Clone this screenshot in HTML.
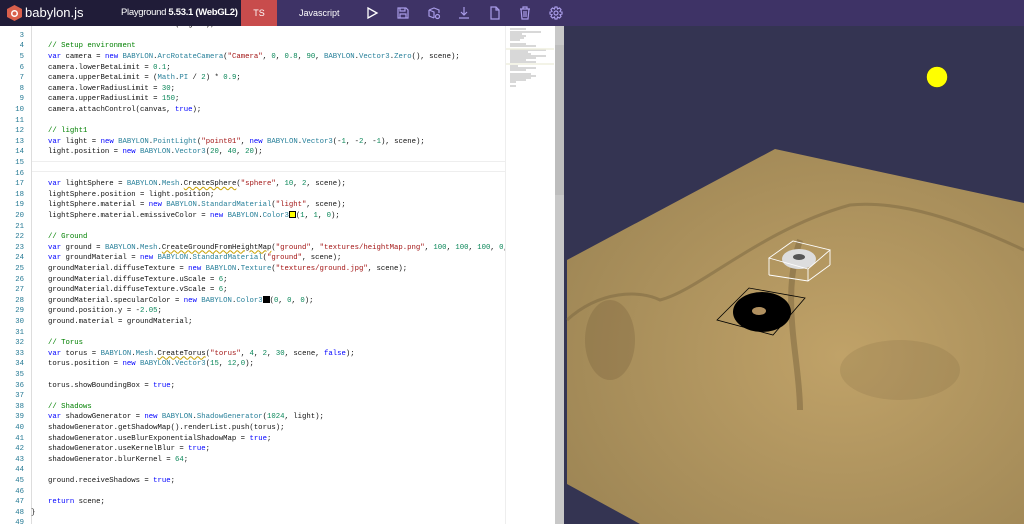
<!DOCTYPE html>
<html><head><meta charset="utf-8"><style>
*{margin:0;padding:0;box-sizing:border-box}
body{width:1024px;height:524px;overflow:hidden;background:#fff;font-family:"Liberation Sans",sans-serif;position:relative}
#top{position:absolute;left:0;top:0;width:1024px;height:26px;z-index:10;background:#3e3366}
#hl{position:absolute;left:0;top:0;width:241px;height:26px;background:#201c38}
#ts{position:absolute;left:241px;top:0;width:36px;height:26px;background:#c84c4c;color:#fff;font-size:9px;text-align:center;line-height:26px}
.ht{position:absolute;top:0;line-height:26px;color:#fff;font-size:9px}
.ic{position:absolute;top:6px}
#ed{position:absolute;left:0;top:26px;width:505px;height:498px;background:#fff;overflow:hidden}
#gut{position:absolute;left:31px;top:26px;width:1px;height:498px;background:#ddd}
.ln{position:absolute;left:0;width:24px;text-align:right;font:7.3px "Liberation Mono",monospace;color:#237893;height:10.6px;line-height:10.6px}
.cd{position:absolute;left:48px;font:7.3px "Liberation Mono",monospace;color:#111;white-space:pre;height:10.6px;line-height:10.6px}
.k{color:#0000ff}.b{color:#267f99}.s{color:#a31515}.n{color:#098658}.c{color:#008000}
.w{text-decoration:underline wavy #c8a000;text-decoration-thickness:1px}
#mini{position:absolute;left:505px;top:26px;width:50px;height:498px;background:#fff;border-left:1px solid #eee}
#sb{position:absolute;left:555px;top:26px;width:9px;height:498px;background:#c8c8c8}
#cv{position:absolute;left:564px;top:26px;width:460px;height:498px;background:#343452;overflow:hidden}
</style></head><body>
<div id="ed"></div><div id="gut"></div>
<div style="position:absolute;left:32px;top:161px;width:473px;height:11px;border-top:1px solid #eee;border-bottom:1px solid #eee"></div>
<div id="lines"></div>
<div id="top">
<div id="hl"></div>
<svg style="position:absolute;left:7px;top:5px" width="15" height="16" viewBox="0 0 15 16"><polygon points="7.5,0 15,4 15,12 7.5,16 0,12 0,4" fill="#d9604c"/><circle cx="7.5" cy="8.5" r="3.5" fill="#fff"/><circle cx="7.5" cy="8.5" r="2" fill="#d9604c"/></svg>
<div class="ht" style="left:25px;font-size:13px">babylon.js</div>
<div class="ht" style="left:121px;font-size:9.5px;letter-spacing:-0.3px">Playground <b>5.53.1 (WebGL2)</b></div>
<div id="ts">TS</div>
<div class="ht" style="left:299px">Javascript</div>
<svg class="ic" style="left:365px" width="14" height="14" viewBox="0 0 14 14" fill="none" stroke="#fff" stroke-width="1.3"><path d="M3 2L12 7L3 12Z"/></svg>
<svg class="ic" style="left:396px" width="14" height="14" viewBox="0 0 14 14" fill="none" stroke="#a99ce8" stroke-width="1.2"><path d="M2 2H10L12 4V12H2Z M4 2V5H9V2 M4 12V8H10V12"/></svg>
<svg class="ic" style="left:427px" width="14" height="14" viewBox="0 0 14 14" fill="none" stroke="#a99ce8" stroke-width="1.2"><path d="M2 4L7 2L12 4V7 M2 4V10L7 12 M2 4L7 6V12"/><circle cx="10.5" cy="10.5" r="2"/></svg>
<svg class="ic" style="left:457px" width="14" height="14" viewBox="0 0 14 14" fill="none" stroke="#a99ce8" stroke-width="1.2"><path d="M7 1V9 M4 6L7 9L10 6 M2 12H12"/></svg>
<svg class="ic" style="left:488px" width="14" height="14" viewBox="0 0 14 14" fill="none" stroke="#a99ce8" stroke-width="1.2"><path d="M3 1H8L11 4V13H3Z M8 1V4H11"/></svg>
<svg class="ic" style="left:518px" width="14" height="14" viewBox="0 0 14 14" fill="none" stroke="#a99ce8" stroke-width="1.2"><path d="M2 3H12 M5 3V1H9V3 M3 3L4 13H10L11 3 M6 5V11 M8 5V11"/></svg>
<svg class="ic" style="left:549px" width="14" height="14" viewBox="0 0 14 14" fill="none" stroke="#a99ce8" stroke-width="1.2"><circle cx="7" cy="7" r="2"/><path d="M6 1H8L8.5 3L10.5 2L12 3.5L11 5.5L13 6V8L11 8.5L12 10.5L10.5 12L8.5 11L8 13H6L5.5 11L3.5 12L2 10.5L3 8.5L1 8V6L3 5.5L2 3.5L3.5 2L5.5 3Z"/></svg>
</div>
<div id="mini">
<svg width="50" height="130" viewBox="0 0 50 130"><g stroke="#999" stroke-width="0.8"><path d="M4 3H20M4 6H35M4 8H16M4 10H20M4 12H18M4 14H14M4 18H20M4 20H30M4 24H40M4 26H22M4 28H25M4 30H40M4 32H30M4 34H20M4 36H30M4 40H12M4 42H30M4 44H20M4 48H25M4 50H30M4 52H25M4 54H20M4 56H10M4 60H10"/></g><rect x="0" y="22" width="48" height="2" fill="#eed" opacity=".7"/><rect x="0" y="37" width="48" height="2" fill="#eed" opacity=".7"/></svg>
</div>
<div id="sb"><div style="position:absolute;left:0;top:19px;width:9px;height:150px;background:#bdbdbd"></div></div>
<div id="cv">
<svg width="460" height="498" viewBox="564 26 460 498">
<defs><radialGradient id="g" cx="60%" cy="55%" r="70%"><stop offset="0" stop-color="#c0a268"/><stop offset="1" stop-color="#9e8655"/></radialGradient></defs>
<polygon points="775,149 1024,203 1024,524 640,524 567,484 567,260" fill="url(#g)"/>
<path d="M567,320 C600,290 640,290 660,300 C700,290 760,230 850,205 C900,200 960,220 1024,250" stroke="#7a6540" stroke-width="3" fill="none" opacity=".5"/>
<path d="M800,240 C780,300 800,360 800,410" stroke="#6a5535" stroke-width="6" fill="none" opacity=".4"/>
<ellipse cx="610" cy="340" rx="25" ry="40" fill="#6a5535" opacity=".25"/>
<ellipse cx="900" cy="370" rx="60" ry="30" fill="#6a5535" opacity=".15"/>
<polygon points="717,320 749,288 805,298 773,335" fill="none" stroke="#000" stroke-width="0.8"/>
<ellipse cx="762" cy="312" rx="29" ry="20" fill="#000"/>
<ellipse cx="759" cy="311" rx="7" ry="4" fill="#b09060"/>
<ellipse cx="799" cy="259" rx="17" ry="10" fill="#ddd"/>
<ellipse cx="799" cy="257" rx="6" ry="3" fill="#555"/>
<g fill="none" stroke="#fff" stroke-width="0.9"><polygon points="769,258 793,241 830,250 808,269"/><path d="M769,258V275 M808,269V281 M830,250V265 M769,275L808,281L830,265"/></g>
<circle cx="937" cy="77" r="10.5" fill="#ffff00" stroke="#333" stroke-width="0.5"/>
</svg>
</div>
<script>
var L={2:'<span class="k">var</span> scene = <span class="k">new</span> <span class="b">BABYLON</span>.<span class="b">Scene</span>(engine);',4:'<span class="c">// Setup environment</span>',
5:'<span class="k">var</span> camera = <span class="k">new</span> <span class="b">BABYLON</span>.<span class="b">ArcRotateCamera</span>(<span class="s">"Camera"</span>, <span class="n">0</span>, <span class="n">0.8</span>, <span class="n">90</span>, <span class="b">BABYLON</span>.<span class="b">Vector3</span>.<span class="b">Zero</span>(), scene);',
6:'camera.lowerBetaLimit = <span class="n">0.1</span>;',
7:'camera.upperBetaLimit = (<span class="b">Math</span>.<span class="b">PI</span> / <span class="n">2</span>) * <span class="n">0.9</span>;',
8:'camera.lowerRadiusLimit = <span class="n">30</span>;',
9:'camera.upperRadiusLimit = <span class="n">150</span>;',
10:'camera.attachControl(canvas, <span class="k">true</span>);',
12:'<span class="c">// light1</span>',
13:'<span class="k">var</span> light = <span class="k">new</span> <span class="b">BABYLON</span>.<span class="b">PointLight</span>(<span class="s">"point01"</span>, <span class="k">new</span> <span class="b">BABYLON</span>.<span class="b">Vector3</span>(-<span class="n">1</span>, -<span class="n">2</span>, -<span class="n">1</span>), scene);',
14:'light.position = <span class="k">new</span> <span class="b">BABYLON</span>.<span class="b">Vector3</span>(<span class="n">20</span>, <span class="n">40</span>, <span class="n">20</span>);',
17:'<span class="k">var</span> lightSphere = <span class="b">BABYLON</span>.<span class="b">Mesh</span>.<span class="w">CreateSphere</span>(<span class="s">"sphere"</span>, <span class="n">10</span>, <span class="n">2</span>, scene);',
18:'lightSphere.position = light.position;',
19:'lightSphere.material = <span class="k">new</span> <span class="b">BABYLON</span>.<span class="b">StandardMaterial</span>(<span class="s">"light"</span>, scene);',
20:'lightSphere.material.emissiveColor = <span class="k">new</span> <span class="b">BABYLON</span>.<span class="b">Color3</span><span style="display:inline-block;width:7px;height:7px;background:#ff0;border:1px solid #000;vertical-align:-1px"></span>(<span class="n">1</span>, <span class="n">1</span>, <span class="n">0</span>);',
22:'<span class="c">// Ground</span>',
23:'<span class="k">var</span> ground = <span class="b">BABYLON</span>.<span class="b">Mesh</span>.<span class="w">CreateGroundFromHeightMap</span>(<span class="s">"ground"</span>, <span class="s">"textures/heightMap.png"</span>, <span class="n">100</span>, <span class="n">100</span>, <span class="n">100</span>, <span class="n">0</span>,',
24:'<span class="k">var</span> groundMaterial = <span class="k">new</span> <span class="b">BABYLON</span>.<span class="b">StandardMaterial</span>(<span class="s">"ground"</span>, scene);',
25:'groundMaterial.diffuseTexture = <span class="k">new</span> <span class="b">BABYLON</span>.<span class="b">Texture</span>(<span class="s">"textures/ground.jpg"</span>, scene);',
26:'groundMaterial.diffuseTexture.uScale = <span class="n">6</span>;',
27:'groundMaterial.diffuseTexture.vScale = <span class="n">6</span>;',
28:'groundMaterial.specularColor = <span class="k">new</span> <span class="b">BABYLON</span>.<span class="b">Color3</span><span style="display:inline-block;width:7px;height:7px;background:#000;vertical-align:-1px"></span>(<span class="n">0</span>, <span class="n">0</span>, <span class="n">0</span>);',
29:'ground.position.y = -<span class="n">2.05</span>;',
30:'ground.material = groundMaterial;',
32:'<span class="c">// Torus</span>',
33:'<span class="k">var</span> torus = <span class="b">BABYLON</span>.<span class="b">Mesh</span>.<span class="w">CreateTorus</span>(<span class="s">"torus"</span>, <span class="n">4</span>, <span class="n">2</span>, <span class="n">30</span>, scene, <span class="k">false</span>);',
34:'torus.position = <span class="k">new</span> <span class="b">BABYLON</span>.<span class="b">Vector3</span>(<span class="n">15</span>, <span class="n">12</span>,<span class="n">0</span>);',
36:'torus.showBoundingBox = <span class="k">true</span>;',
38:'<span class="c">// Shadows</span>',
39:'<span class="k">var</span> shadowGenerator = <span class="k">new</span> <span class="b">BABYLON</span>.<span class="b">ShadowGenerator</span>(<span class="n">1024</span>, light);',
40:'shadowGenerator.getShadowMap().renderList.push(torus);',
41:'shadowGenerator.useBlurExponentialShadowMap = <span class="k">true</span>;',
42:'shadowGenerator.useKernelBlur = <span class="k">true</span>;',
43:'shadowGenerator.blurKernel = <span class="n">64</span>;',
45:'ground.receiveShadows = <span class="k">true</span>;',
47:'<span class="k">return</span> scene;'};
var h='';
for(var n=2;n<=49;n++){var t=(30.7+(n-3)*10.6).toFixed(1);
if(n>2)h+='<div class="ln" style="top:'+t+'px">'+n+'</div>';
if(L[n])h+='<div class="cd" style="top:'+t+'px">'+L[n]+'</div>';}
h+='<div class="cd" style="left:31px;top:'+(30.7+45*10.6)+'px">}</div>';
document.getElementById('lines').innerHTML=h;
</script>
</body></html>
